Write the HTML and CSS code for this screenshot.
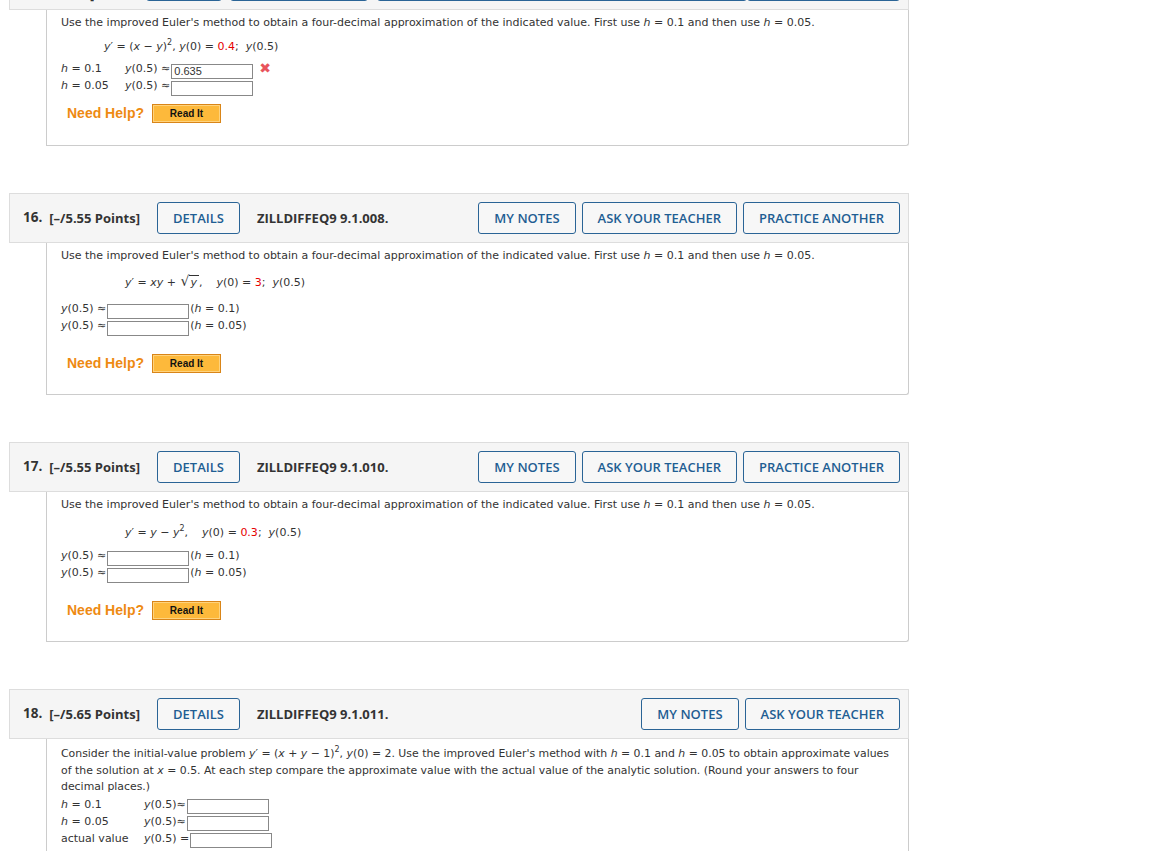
FILE: index.html
```html
<!DOCTYPE html>
<html lang="en">
<head>
  <meta charset="UTF-8" />
  <title>Assignment - Improved Euler's Method</title>
  <link rel="stylesheet" href="styles.css">
</head>
<body>
<div class="page">

  <section class="question q15">
    <div class="q-head">
      <span class="q-num">15.</span>
      <span class="q-points">[–/5.55 Points]</span>
      <button type="button" class="q-btn q15-a">DETAILS</button>
      <button type="button" class="q-btn q15-b">PREVIOUS ANSWERS</button>
      <button type="button" class="q-btn q15-c">ZILLDIFFEQ9 9.1.007.</button>
      <button type="button" class="q-btn q15-d">MY NOTES</button>
    </div>
    <div class="q-body">
      <p class="prompt">Use the improved Euler's method to obtain a four-decimal approximation of the indicated value. First use <i>h</i> = 0.1 and then use <i>h</i> = 0.05.</p>
      <div class="eq eq-near"><i>y</i>′ = (<i>x</i> − <i>y</i>)<sup>2</sup>, <i>y</i>(0) = <span class="given">0.4</span>;&nbsp; <i>y</i>(0.5)</div>
      <div class="answers cols-h">
        <span class="ans"><i>h</i> = 0.1</span>
        <span class="ans"><i>y</i>(0.5) ≈<input type="text" class="box" value="0.635" /><span class="wrong">✖</span></span>
        <span class="ans"><i>h</i> = 0.05</span>
        <span class="ans"><i>y</i>(0.5) ≈<input type="text" class="box" /></span>
      </div>
      <div class="help">
        <span class="need">Need Help?</span>
        <button type="button" class="read-it">Read It</button>
      </div>
    </div>
  </section>

  <section class="question">
    <div class="q-head">
      <span class="q-num">16.</span>
      <span class="q-points">[–/5.55 Points]</span>
      <button type="button" class="q-btn">DETAILS</button>
      <span class="q-code">ZILLDIFFEQ9 9.1.008.</span>
      <div class="q-tools">
        <button type="button" class="q-btn">MY NOTES</button>
        <button type="button" class="q-btn">ASK YOUR TEACHER</button>
        <button type="button" class="q-btn">PRACTICE ANOTHER</button>
      </div>
    </div>
    <div class="q-body">
      <p class="prompt">Use the improved Euler's method to obtain a four-decimal approximation of the indicated value. First use <i>h</i> = 0.1 and then use <i>h</i> = 0.05.</p>
      <div class="eq"><i>y</i>′ = <i>xy</i> + <span class="sqrt"><span class="root">√</span><span class="rad"><i>y</i></span></span>,&nbsp;&nbsp;&nbsp; <i>y</i>(0) = <span class="given">3</span>;&nbsp; <i>y</i>(0.5)</div>
      <div class="answers">
        <span class="ans"><i>y</i>(0.5) ≈<input type="text" class="box" />(<i>h</i> = 0.1)</span>
        <span class="ans"><i>y</i>(0.5) ≈<input type="text" class="box" />(<i>h</i> = 0.05)</span>
      </div>
      <div class="help">
        <span class="need">Need Help?</span>
        <button type="button" class="read-it">Read It</button>
      </div>
    </div>
  </section>

  <section class="question">
    <div class="q-head">
      <span class="q-num">17.</span>
      <span class="q-points">[–/5.55 Points]</span>
      <button type="button" class="q-btn">DETAILS</button>
      <span class="q-code">ZILLDIFFEQ9 9.1.010.</span>
      <div class="q-tools">
        <button type="button" class="q-btn">MY NOTES</button>
        <button type="button" class="q-btn">ASK YOUR TEACHER</button>
        <button type="button" class="q-btn">PRACTICE ANOTHER</button>
      </div>
    </div>
    <div class="q-body">
      <p class="prompt">Use the improved Euler's method to obtain a four-decimal approximation of the indicated value. First use <i>h</i> = 0.1 and then use <i>h</i> = 0.05.</p>
      <div class="eq eq-sup"><i>y</i>′ = <i>y</i> − <i>y</i><sup>2</sup>,&nbsp;&nbsp;&nbsp; <i>y</i>(0) = <span class="given">0.3</span>;&nbsp; <i>y</i>(0.5)</div>
      <div class="answers">
        <span class="ans"><i>y</i>(0.5) ≈<input type="text" class="box" />(<i>h</i> = 0.1)</span>
        <span class="ans"><i>y</i>(0.5) ≈<input type="text" class="box" />(<i>h</i> = 0.05)</span>
      </div>
      <div class="help">
        <span class="need">Need Help?</span>
        <button type="button" class="read-it">Read It</button>
      </div>
    </div>
  </section>

  <section class="question">
    <div class="q-head">
      <span class="q-num">18.</span>
      <span class="q-points">[–/5.65 Points]</span>
      <button type="button" class="q-btn">DETAILS</button>
      <span class="q-code">ZILLDIFFEQ9 9.1.011.</span>
      <div class="q-tools">
        <button type="button" class="q-btn">MY NOTES</button>
        <button type="button" class="q-btn">ASK YOUR TEACHER</button>
      </div>
    </div>
    <div class="q-body">
      <p class="prompt long">Consider the initial-value problem <i>y</i>′ = (<i>x</i> + <i>y</i> − 1)<sup>2</sup>, <i>y</i>(0) = 2. Use the improved Euler's method with <i>h</i> = 0.1 and <i>h</i> = 0.05 to obtain approximate values of the solution at <i>x</i> = 0.5. At each step compare the approximate value with the actual value of the analytic solution. (Round your answers to four decimal places.)</p>
      <div class="answers cols-wide">
        <span class="ans"><i>h</i> = 0.1</span>
        <span class="ans"><i>y</i>(0.5)≈<input type="text" class="box" /></span>
        <span class="ans"><i>h</i> = 0.05</span>
        <span class="ans"><i>y</i>(0.5)≈<input type="text" class="box" /></span>
        <span class="ans">actual value</span>
        <span class="ans"><i>y</i>(0.5) =<input type="text" class="box" /></span>
      </div>
      <div class="help">
        <span class="need">Need Help?</span>
        <button type="button" class="read-it">Read It</button>
      </div>
    </div>
  </section>

</div>
</body>
</html>
```

FILE: styles.css
```css
body { margin: 0; background: #fff; color: #333; font-family: "DejaVu Sans", Verdana, sans-serif; }
.page { width: 900px; margin-left: 9px; }

.question { margin-bottom: 47px; }
.q15 { margin-top: -40px; }

.q-head {
  display: flex; align-items: center; height: 50px; box-sizing: border-box;
  background: #f5f5f5; border: 1px solid #ddd; padding: 0 8px 0 13px;
  font-family: "Open Sans", sans-serif; font-weight: 700; color: #333;
}
.q-num { font-size: 13.5px; margin-right: 7px; position: relative; top: -1px; }
.q-points { font-size: 13px; margin-right: 17px; }
.q-code { font-size: 13px; margin-left: 17px; }
.q-tools { margin-left: auto; display: flex; gap: 6px; }
.q-btn {
  height: 32px; padding: 0 15px; background: #f7f7f7; color: #1f5e93;
  border: 1px solid #2a6496; border-radius: 3px; white-space: nowrap; overflow: hidden;
  font-family: "Open Sans", sans-serif; font-weight: 600; font-size: 13px;
}
.q15-b { width: 153px; margin-left: 8px; }
.q15-c { width: 418px; margin-left: 9px; }
.q15-d { margin-left: auto; width: 170px; }

.q-body {
  margin-left: 37px; border: 1px solid #ccc; border-top: none;
  border-bottom-right-radius: 3px; padding: 4px 10px 21px 14px;
  font-size: 11px; line-height: 17px;
}
.q15 .q-body { padding-bottom: 22px; }
.prompt { margin: 0; }
.prompt.long { padding-top: 3px; line-height: 16.5px; font-size: 10.9px; }
i { font-style: italic; }
sup { font-size: 8px; line-height: 0; vertical-align: 5px; }
.given { color: #e60000; }

.eq { margin: 10px 0 9px 64px; }
.eq-near { margin: 7px 0 5px 43px; }
.eq-sup { margin: 11px 0 6px 64px; }
.sqrt { white-space: nowrap; }
.root { font-size: 14px; line-height: 0; margin-left: 1px; }
.rad { border-top: 1px solid #333; padding: 0 2px 0 1px; }

.answers { display: flex; flex-direction: column; }
.cols-h { display: grid; grid-template-columns: 64px auto; justify-content: start; }
.cols-wide { display: grid; grid-template-columns: 83px auto; justify-content: start; }
.ans { display: block; height: 17px; white-space: nowrap; }
.box {
  width: 82px; height: 15px; box-sizing: border-box; margin: 0 1px; padding: 0 2px;
  vertical-align: -3px; border: 1px solid #888;
  font-family: "Liberation Sans", Arial, sans-serif; font-size: 11px; color: #333;
}
.wrong { color: #e8545c; font-size: 14px; margin-left: 5px; vertical-align: -1px; }

.help { display: flex; align-items: center; margin: 20px 0 0 6px; }
.q15 .help { margin-top: 10px; }
.need {
  font-family: "Liberation Sans", Arial, sans-serif; font-weight: 700; font-size: 14px;
  color: #ee8a12; margin-right: 8px;
}
.read-it {
  width: 69px; height: 19px; padding: 0; background: #fdb93b;
  border: 1px solid #d98518; box-shadow: inset 0 0 0 1px #ffd37d;
  font-family: "Liberation Sans", Arial, sans-serif; font-weight: 700; font-size: 10px; color: #111;
}
```
